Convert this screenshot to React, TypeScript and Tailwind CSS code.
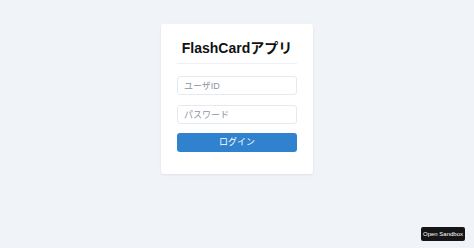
import React from "react";

export default function App() {
  const font = { fontFamily: '"Liberation Sans", Arial, "Noto Sans CJK JP", sans-serif' };
  return (
    <div className="min-h-screen w-full bg-[#f0f4f8] pt-[24px]" style={font}>
      <div className="mx-auto w-[152px] rounded-[3px] bg-white px-4 pt-4 pb-[22px] shadow-[0_1px_3px_rgba(0,0,0,0.08)]">
        <h1 className="border-b border-[#edf0f4] pb-[6px] text-center text-[14px] font-bold leading-[17px] text-[#111111]">
          FlashCardアプリ
        </h1>
        <div className="mt-[12px] flex flex-col gap-[10px]">
          <input
            className="h-[19px] w-full rounded-[3px] border border-[#e6eaf0] px-[6px] text-[9px] outline-none placeholder:text-[#8a94a3]"
            placeholder="ユーザID"
          />
          <input
            type="password"
            className="h-[19px] w-full rounded-[3px] border border-[#e6eaf0] px-[6px] text-[9px] outline-none placeholder:text-[#8a94a3]"
            placeholder="パスワード"
          />
        </div>
        <button className="mt-[9px] flex h-[19px] w-full items-center justify-center rounded-[3px] bg-[#3182ce] text-[9px] text-white">
          ログイン
        </button>
      </div>
      <div className="fixed right-[9px] bottom-[7px] flex h-[14px] w-[44px] items-center justify-center rounded-[2px] bg-[#151515] text-[6px] text-white">
        Open Sandbox
      </div>
    </div>
  );
}
